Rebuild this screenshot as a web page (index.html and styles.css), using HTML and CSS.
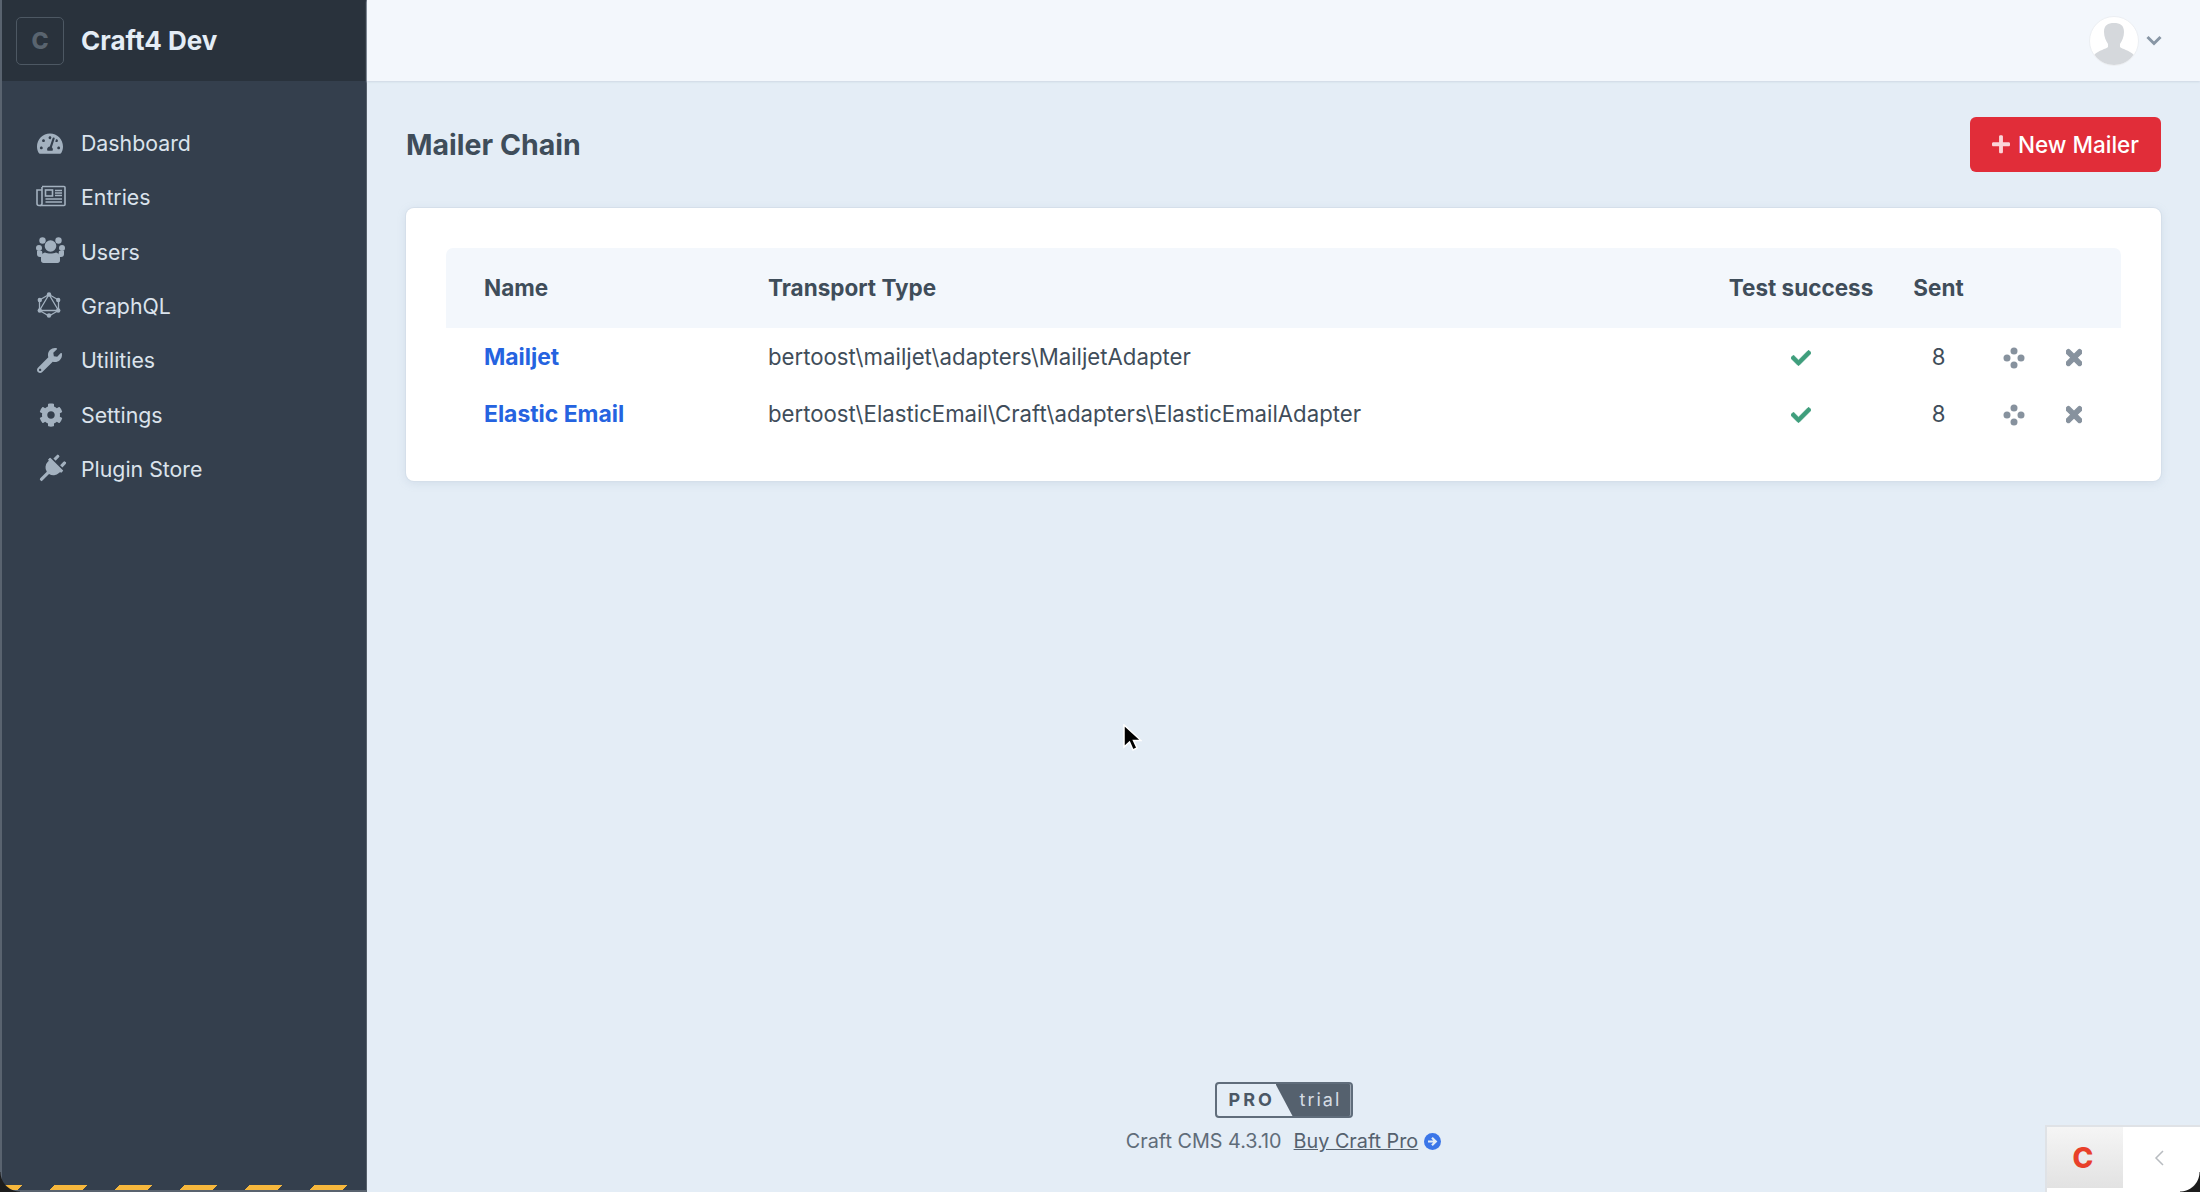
FILE: index.html
```html
<!DOCTYPE html>
<html lang="en">
<head>
<meta charset="UTF-8">
<title>Mailer Chain - Craft4 Dev</title>
<link rel="stylesheet" href="styles.css">
</head>
<body>
<!-- sidebar -->
<div class="sidebar">
    <div class="site-head">
        <div class="site-mark">C</div>
        <div class="site-name">Craft4 Dev</div>
    </div>
    <div class="nav">
        <a class="nav-item"><span class="nav-icon"><svg width="26" viewBox="0 0 576 512"><path d="M288 32C128.94 32 0 160.94 0 320c0 52.8 14.25 102.26 39.06 144.8 5.61 9.62 16.3 15.2 27.44 15.2h443c11.14 0 21.83-5.58 27.44-15.2C561.75 422.26 576 372.8 576 320c0-159.06-128.94-288-288-288zm0 64c14.71 0 26.58 10.13 30.32 23.65-1.11 2.26-2.64 4.23-3.45 6.67l-9.22 27.67c-5.13 3.49-10.97 6.01-17.64 6.01-17.67 0-32-14.33-32-32S270.33 96 288 96zM96 384c-17.67 0-32-14.33-32-32s14.33-32 32-32 32 14.33 32 32-14.33 32-32 32zm48-160c-17.67 0-32-14.33-32-32s14.33-32 32-32 32 14.33 32 32-14.33 32-32 32zm246.77-72.41l-61.33 184C343.13 347.33 352 364.54 352 384c0 11.72-3.38 22.55-8.88 32H232.88c-5.5-9.45-8.88-20.28-8.88-32 0-33.94 26.5-61.43 59.9-63.59l61.34-184.01c4.17-12.56 17.73-19.45 30.36-15.17 12.57 4.19 19.35 17.79 15.17 30.36zm14.66 57.2l15.52-46.55c3.47-1.29 7.13-2.23 11.05-2.23 17.67 0 32 14.33 32 32s-14.33 32-32 32c-11.38-.01-20.89-6.28-26.57-15.22zM480 384c-17.67 0-32-14.33-32-32s14.33-32 32-32 32 14.33 32 32-14.33 32-32 32z"/></svg></span>Dashboard</a>
        <a class="nav-item"><span class="nav-icon icon-wide"><svg width="30" height="22" viewBox="0 0 30 22" fill="none" stroke="#a3b1bf" stroke-width="1.6"><path d="M6 1.500h22a1 1 0 0 1 1 1v17a1 1 0 0 1-1 1H3a2 2 0 0 1-2-2V5h5"/><path d="M6 2v16.500a2 2 0 0 1-2 2"/><rect x="9.500" y="5" width="7" height="6"/><path d="M19 5.500h7M19 8h7M19 10.500h7M9.500 14h16.500M9.500 17h16.500"/></svg></span>Entries</a>
        <a class="nav-item"><span class="nav-icon icon-wide"><svg width="29" height="26" viewBox="0 0 29 26"><circle cx="6.500" cy="3.500" r="3.200"/><circle cx="22.500" cy="3.500" r="3.200"/><circle cx="3" cy="11" r="3"/><circle cx="26" cy="11" r="3"/><path d="M1 14h5l1 6H4c-2 0-3-1-3-3zM28 14h-5l-1 6h3c2 0 3-1 3-3z"/><circle cx="14.500" cy="9" r="5.800"/><path d="M9 15.500c3 1.300 8 1.300 11 0 2.500.5 4 2.500 4 5.500v2.500c0 1.500-1 2.500-2.500 2.500h-14C6 26 5 25 5 23.500V21c0-3 1.500-5 4-5.500z"/></svg></span>Users</a>
        <a class="nav-item"><span class="nav-icon"><svg class="icon-graphql" width="24" height="26" viewBox="0 0 24 26" fill="none" stroke="#a3b1bf" stroke-width="1.300"><path d="M12 2.500l9.500 5.500v10.500L12 24 2.500 18.500V8zM12 2.500L2.500 18.500h19z"/><g fill="#a3b1bf" stroke="none"><circle cx="12" cy="2.500" r="2.200"/><circle cx="21.200" cy="8" r="2.200"/><circle cx="21.200" cy="18.500" r="2.200"/><circle cx="12" cy="23.500" r="2.200"/><circle cx="2.800" cy="18.500" r="2.200"/><circle cx="2.800" cy="8" r="2.200"/></g></svg></span>GraphQL</a>
        <a class="nav-item"><span class="nav-icon"><svg width="25" viewBox="0 0 512 512"><path d="M507.73 109.1c-2.24-9.03-13.54-12.09-20.12-5.51l-74.36 74.36-67.88-11.31-11.31-67.88 74.36-74.36c6.62-6.62 3.43-17.9-5.66-20.16-47.38-11.74-99.55.91-136.58 37.93-39.64 39.64-50.55 97.1-34.05 147.2L18.74 402.76c-24.99 24.99-24.99 65.51 0 90.5 24.99 24.99 65.51 24.99 90.5 0l213.21-213.21c50.12 16.71 107.47 5.68 147.37-34.22 37.07-37.07 49.7-89.32 37.91-136.73zM64 472c-13.25 0-24-10.75-24-24 0-13.26 10.75-24 24-24s24 10.74 24 24c0 13.25-10.75 24-24 24z"/></svg></span>Utilities</a>
        <a class="nav-item"><span class="nav-icon icon-cog"><svg width="24" viewBox="0 0 512 512"><path d="M487.4 315.7l-42.6-24.6c4.3-23.2 4.3-47 0-70.2l42.6-24.6c4.9-2.8 7.1-8.6 5.5-14-11.1-35.6-30-67.8-54.7-94.6-3.8-4.1-10-5.1-14.8-2.3L380.8 110c-17.9-15.4-38.5-27.3-60.8-35.1V25.8c0-5.6-3.9-10.5-9.4-11.7-36.7-8.2-74.3-7.8-109.2 0-5.5 1.2-9.4 6.1-9.4 11.7V75c-22.2 7.9-42.8 19.8-60.8 35.1L88.7 85.5c-4.9-2.8-11-1.9-14.8 2.3-24.7 26.7-43.6 58.9-54.7 94.6-1.7 5.4.6 11.2 5.5 14L67.3 221c-4.3 23.2-4.3 47 0 70.2l-42.6 24.6c-4.9 2.8-7.1 8.6-5.500 14 11.100 35.600 30 67.800 54.700 94.600 3.800 4.100 10 5.100 14.800 2.300l42.600-24.600c17.900 15.400 38.500 27.300 60.800 35.100v49.200c0 5.600 3.900 10.500 9.400 11.700 36.700 8.200 74.300 7.800 109.200 0 5.500-1.200 9.400-6.100 9.400-11.700v-49.200c22.200-7.900 42.800-19.800 60.800-35.100l42.600 24.600c4.900 2.800 11 1.900 14.800-2.300 24.700-26.700 43.600-58.900 54.700-94.600 1.500-5.500-.7-11.300-5.600-14.100zM256 336c-44.100 0-80-35.900-80-80s35.900-80 80-80 80 35.900 80 80-35.900 80-80 80z"/></svg></span>Settings</a>
        <a class="nav-item"><span class="nav-icon"><svg class="plug" width="19" viewBox="0 0 384 620"><path d="M320,32a32,32,0,0,0-64,0v96h64Zm48,128H16A16,16,0,0,0,0,176v32a16,16,0,0,0,16,16H32v32A160.07,160.07,0,0,0,160,412.8V600a32,32,0,0,0,64,0V412.8A160.07,160.07,0,0,0,352,256V224h16a16,16,0,0,0,16-16V176A16,16,0,0,0,368,160ZM128,32a32,32,0,0,0-64,0v96h64Z"/></svg></span>Plugin Store</a>
    </div>
    <div class="dev-stripes"></div>
</div>

<!-- main area -->
<div class="main">
    <div class="top-bar">
        <div class="avatar"><svg width="48" height="48" viewBox="0 0 48 48"><path d="M14 15c0-7 4-9 10-9s10 2 10 9c0 5-2 9-4 12v3c2 2 9 3 14 8a23 23 0 0 1-40 0c5-5 12-6 14-8v-3c-2-3-4-7-4-12z" fill="#d5d8dc"/></svg></div>
        <svg class="chevron" width="16" height="11" viewBox="0 0 16 11" fill="none" stroke="#8896a5" stroke-width="3"><path d="M1.500 2l6.500 6.500L14.500 2"/></svg>
    </div>

    <div class="page-head">
        <h1 class="page-title">Mailer Chain</h1>
        <a class="btn-new"><svg width="18" viewBox="0 0 448 512" fill="#fbd5d8"><path d="M416 208H272V64c0-17.67-14.33-32-32-32h-32c-17.67 0-32 14.33-32 32v144H32c-17.67 0-32 14.33-32 32v32c0 17.67 14.33 32 32 32h144v144c0 17.67 14.33 32 32 32h32c17.67 0 32-14.330 32-32V304h144c17.67 0 32-14.330 32-32v-32c0-17.670-14.330-32-32-32z"/></svg>New Mailer</a>
    </div>

    <div class="card">
        <table class="mailers">
            <thead>
                <tr>
                    <th class="col-name">Name</th>
                    <th class="col-type">Transport Type</th>
                    <th class="col-test">Test success</th>
                    <th class="col-sent">Sent</th>
                    <th class="col-move"></th>
                    <th class="col-del"></th>
                </tr>
            </thead>
            <tbody>
                <tr>
                    <td><a class="mailer-link">Mailjet</a></td>
                    <td>bertoost\mailjet\adapters\MailjetAdapter</td>
                    <td class="center"><svg class="icon-check" width="20" viewBox="0 0 512 512"><path d="M173.898 439.404l-166.4-166.4c-9.997-9.997-9.997-26.206 0-36.204l36.203-36.204c9.997-9.998 26.207-9.998 36.204 0L192 312.69 432.095 72.596c9.997-9.997 26.207-9.997 36.204 0l36.203 36.204c9.997 9.997 9.997 26.206 0 36.204l-294.4 294.401c-9.998 9.997-26.207 9.997-36.204-.001z"/></svg></td>
                    <td class="center">8</td>
                    <td class="center"><svg class="icon-move" width="22" height="22" viewBox="0 0 22 22"><circle cx="11" cy="4" r="3.500"/><circle cx="4" cy="11" r="3.500"/><circle cx="18" cy="11" r="3.500"/><circle cx="11" cy="18" r="3.500"/></svg></td>
                    <td class="center cell-del"><svg class="icon-del" width="16" viewBox="0 0 352 512"><path d="M242.72 256l100.07-100.07c12.28-12.28 12.28-32.19 0-44.48l-22.24-22.24c-12.28-12.28-32.19-12.28-44.48 0L176 189.28 75.93 89.21c-12.28-12.28-32.19-12.28-44.48 0L9.21 111.45c-12.28 12.28-12.28 32.19 0 44.48L109.28 256 9.21 356.07c-12.28 12.28-12.28 32.19 0 44.48l22.24 22.24c12.28 12.28 32.2 12.28 44.48 0L176 322.72l100.07 100.07c12.28 12.28 32.2 12.28 44.48 0l22.24-22.24c12.28-12.28 12.28-32.19 0-44.48L242.72 256z"/></svg></td>
                </tr>
                <tr>
                    <td><a class="mailer-link">Elastic Email</a></td>
                    <td>bertoost\ElasticEmail\Craft\adapters\ElasticEmailAdapter</td>
                    <td class="center"><svg class="icon-check" width="20" viewBox="0 0 512 512"><path d="M173.898 439.404l-166.4-166.4c-9.997-9.997-9.997-26.206 0-36.204l36.203-36.204c9.997-9.998 26.207-9.998 36.204 0L192 312.69 432.095 72.596c9.997-9.997 26.207-9.997 36.204 0l36.203 36.204c9.997 9.997 9.997 26.206 0 36.204l-294.4 294.401c-9.998 9.997-26.207 9.997-36.204-.001z"/></svg></td>
                    <td class="center">8</td>
                    <td class="center"><svg class="icon-move" width="22" height="22" viewBox="0 0 22 22"><circle cx="11" cy="4" r="3.500"/><circle cx="4" cy="11" r="3.500"/><circle cx="18" cy="11" r="3.500"/><circle cx="11" cy="18" r="3.500"/></svg></td>
                    <td class="center cell-del"><svg class="icon-del" width="16" viewBox="0 0 352 512"><path d="M242.72 256l100.07-100.07c12.28-12.28 12.28-32.19 0-44.48l-22.24-22.24c-12.28-12.28-32.19-12.28-44.48 0L176 189.28 75.93 89.21c-12.28-12.28-32.19-12.28-44.48 0L9.21 111.45c-12.28 12.28-12.28 32.19 0 44.48L109.28 256 9.21 356.07c-12.28 12.28-12.28 32.19 0 44.48l22.24 22.24c12.28 12.28 32.2 12.28 44.48 0L176 322.72l100.07 100.07c12.28 12.28 32.2 12.28 44.48 0l22.24-22.24c12.28-12.28 12.28-32.19 0-44.48L242.72 256z"/></svg></td>
                </tr>
            </tbody>
        </table>
    </div>

    <div class="footer">
        <div class="edition">
            <span class="edition-name">PRO</span>
            <span class="edition-trial">trial</span>
        </div>
        <div class="version">
            <span>Craft CMS 4.3.10</span>
            <a class="buy-link">Buy Craft Pro</a>
            <svg width="17" height="17" viewBox="0 0 17 17"><circle cx="8.500" cy="8.500" r="8.500" fill="#3b76e8"/><path d="M4 8.500h7.500M8 4.800l3.800 3.700L8 12.200" fill="none" stroke="#e4edf6" stroke-width="2.200"/></svg>
        </div>
    </div>
</div>

<!-- debug toolbar tab -->
<div class="debug-tab">
    <div class="debug-logo">C</div>
    <div class="debug-toggle"><svg width="14" height="18" viewBox="0 0 14 18" fill="none" stroke="#b8bcc0" stroke-width="1.500"><path d="M11 2L4 9l7 7"/></svg></div>
</div>

<!-- mouse pointer in the shot -->
<svg class="pointer" width="20" height="30" viewBox="0 0 20 30"><path d="M2 1v22l5.500-5 3.500 8 4-2-3.500-7.500H19z" fill="#000" stroke="#fff" stroke-width="1.500"/></svg>

<!-- rounded window corners -->
<div class="corner corner-left"></div>
<div class="corner corner-right"></div>
</body>
</html>
```

FILE: styles.css
```css
body, html {
    margin: 0;
    padding: 0;
    height: 100%;
    overflow: hidden;
}

body {
    display: flex;
    width: 2200px;
    height: 1192px;
    position: relative;
    background-color: #e4edf6;
    color: #3f4d5a;
    font-family: 'Inter', 'Liberation Sans', sans-serif;
    font-size: 22.200px;
}

/* sidebar */
.sidebar {
    width: 367px;
    flex-shrink: 0;
    display: flex;
    flex-direction: column;
    box-sizing: border-box;
    background-color: #343f4d;
    border-left: 2px solid #59636f;
    border-right: 1px solid #57616d;
}

.site-head {
    height: 81px;
    box-sizing: border-box;
    display: flex;
    align-items: center;
    gap: 17px;
    padding-left: 14px;
    background-color: #29323c;
}

.site-mark {
    width: 48px;
    height: 48px;
    box-sizing: border-box;
    display: flex;
    align-items: center;
    justify-content: center;
    border: 1.500px solid #4d5863;
    border-radius: 5px;
    color: #59646f;
    font-size: 23px;
    font-weight: 800;
}

.site-name {
    color: #e4edf6;
    font-size: 26px;
    font-weight: 700;
}

.nav {
    flex: 1;
    padding-top: 35px;
}

.nav-item {
    height: 54.300px;
    display: flex;
    align-items: center;
    color: #dbe3ec;
    font-size: 21.300px;
}

.nav-icon {
    width: 79px;
    padding-left: 35px;
    box-sizing: border-box;
    display: flex;
    align-items: center;
    fill: #a3b1bf;
}

.icon-wide {
    padding-left: 34px;
    margin-top: -3px;
}

.icon-graphql {
    margin-top: -2px;
}

.icon-cog {
    padding-left: 37px;
}

.plug {
    transform: rotate(45deg);
    margin-left: 5px;
}

.dev-stripes {
    height: 5px;
    border-bottom: 2px solid #59636f;
    background: repeating-linear-gradient(135deg, #f6b73c 0, #f6b73c 14.800px, #343f4d 14.800px, #343f4d 36.800px, #f6b73c 36.800px, #f6b73c 45.960px);
}

/* main */
.main {
    flex: 1;
    display: flex;
    flex-direction: column;
    min-width: 0;
}

.top-bar {
    height: 81px;
    flex-shrink: 0;
    box-sizing: border-box;
    display: flex;
    align-items: center;
    justify-content: flex-end;
    gap: 7px;
    padding-right: 38px;
    background-color: #f3f7fc;
    box-shadow: 0 1px 2px #cdd8e4;
}

.avatar {
    width: 50px;
    height: 50px;
    box-sizing: border-box;
    border-radius: 50%;
    overflow: hidden;
    background-color: #fff;
    border: 1px solid #eceff3;
}

.page-head {
    display: flex;
    align-items: center;
    justify-content: space-between;
    padding: 36px 39px;
}

.page-title {
    margin: 0;
    font-size: 28.500px;
    font-weight: 700;
}

.btn-new {
    height: 55px;
    box-sizing: border-box;
    display: flex;
    align-items: center;
    gap: 8px;
    padding: 0 22px;
    background-color: #e12d39;
    border-radius: 6px;
    color: #fff;
    font-size: 22.500px;
    font-weight: 500;
}

.card {
    margin: 0 39px;
    padding: 40px 40px 39px;
    background-color: #fff;
    border-radius: 8px;
    box-shadow: 0 0 0 1px #d5dfea, 0 2px 8px rgba(150, 170, 195, 0.25);
}

.mailers {
    width: 100%;
    border-collapse: collapse;
    table-layout: fixed;
}

.mailers th {
    height: 80px;
    padding: 0 0 2px;
    box-sizing: border-box;
    text-align: left;
    background-color: #f3f7fc;
    font-size: 22.500px;
    font-weight: 700;
}

.mailers th:first-child {
    border-top-left-radius: 7px;
}

.mailers th:last-child {
    border-top-right-radius: 7px;
}

.mailers td {
    height: 57px;
    padding: 0;
    font-weight: 400;
}

.col-name {
    width: 322px;
    padding-left: 38px !important;
    box-sizing: border-box;
}

.mailers td:first-child {
    padding-left: 38px;
}

.col-type {
    width: 941px;
}

.col-test {
    width: 184px;
}

.col-sent {
    width: 91px;
}

.col-move {
    width: 60px;
}

.center {
    text-align: center;
}

.mailers td.cell-del {
    padding-right: 18px;
}

.mailers th.col-test,
.mailers th.col-sent {
    text-align: center;
}

.mailers svg {
    display: block;
    margin: 3px auto 0;
}

.mailer-link {
    color: #2563e0;
    font-size: 22.900px;
    font-weight: 700;
}

.icon-check {
    fill: #3f9e7c;
    stroke: #3f9e7c;
    stroke-width: 20;
}

.icon-move {
    fill: #87929e;
}

.icon-del {
    fill: #87929e;
    stroke: #87929e;
    stroke-width: 30;
}

/* footer */
.footer {
    margin-top: auto;
    padding-bottom: 39px;
    display: flex;
    flex-direction: column;
    align-items: center;
    gap: 11px;
    color: #5f6c79;
    font-size: 19.800px;
}

.edition {
    width: 138px;
    height: 36px;
    box-sizing: border-box;
    display: flex;
    border: 2px solid #606d7b;
    border-radius: 4px;
    overflow: hidden;
    font-size: 18px;
}

.edition-name {
    width: 76px;
    padding-left: 12px;
    box-sizing: border-box;
    line-height: 32px;
    color: #4b5866;
    font-weight: 700;
    letter-spacing: 3px;
}

.edition-trial {
    flex: 1;
    margin-left: -17px;
    padding-left: 24px;
    line-height: 32px;
    color: #d5dce4;
    background-color: #55616e;
    letter-spacing: 2px;
    clip-path: polygon(0 0, 100% 0, 100% 100%, 17px 100%);
}

.version {
    display: flex;
    align-items: center;
    gap: 12px;
}

.buy-link {
    color: #55616e;
    text-decoration: underline;
    margin-right: -6px;
}

/* debug toolbar tab, sits over the page */
.debug-tab {
    position: absolute;
    right: 0;
    bottom: 0;
    width: 155px;
    height: 67px;
    display: flex;
    box-sizing: border-box;
    padding-bottom: 4px;
    background-color: #fff;
    border-top: 2px solid #dfe2e6;
    border-left: 2px solid #dfe2e6;
}

.debug-logo {
    width: 76px;
    display: flex;
    align-items: center;
    justify-content: center;
    padding-right: 4px;
    box-sizing: border-box;
    background: linear-gradient(#f5f5f5, #e2e2e2);
    color: #e8402a;
    font-size: 28px;
    font-weight: 800;
}

.debug-toggle {
    flex: 1;
    display: flex;
    align-items: center;
    justify-content: center;
    padding-right: 6px;
    box-sizing: border-box;
}

.pointer {
    position: absolute;
    left: 1122px;
    top: 724px;
}

.corner {
    position: absolute;
    bottom: 0;
    width: 20px;
    height: 20px;
}

.corner-left {
    left: 0;
    background: radial-gradient(circle at 100% 0, transparent 19px, #1c1c1c 20px);
}

.corner-right {
    right: 0;
    background: radial-gradient(circle at 0 0, transparent 19px, #1c1c1c 20px);
}
```
